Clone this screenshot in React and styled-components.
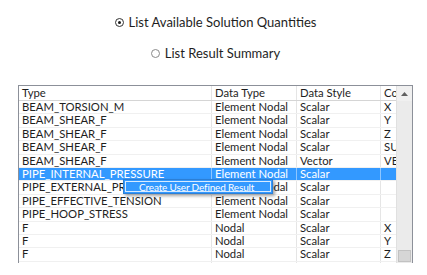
import React from "react";
import styled, { createGlobalStyle } from "styled-components";

const GlobalStyle = createGlobalStyle`
  html, body {
    margin: 0;
    padding: 0;
    background: #ffffff;
  }
  body {
    font-family: Lato, "Noto Sans", sans-serif;
    color: #1e1e1e;
  }
`;

const Page = styled.div`
  width: 427px;
  height: 275px;
  overflow: hidden;
  display: flex;
  flex-direction: column;
`;

const Options = styled.div`
  display: flex;
  flex-direction: column;
  align-items: center;
  gap: 12px;
  padding-top: 13px;
  padding-left: 4px;
  height: 73px;
  box-sizing: border-box;
`;

const RadioRow = styled.label`
  display: flex;
  align-items: center;
  gap: 5px;
  font-size: 13px;
  line-height: 19px;
  color: #1e1e1e;
`;

const RadioDot = styled.span`
  width: 7px;
  height: 7px;
  border-radius: 50%;
  border: 1px solid ${(p) => (p.checked ? "#333" : "#8a8a8a")};
  background: #fff;
  display: flex;
  align-items: center;
  justify-content: center;
  box-sizing: content-box;

  &::after {
    content: "";
    width: 3px;
    height: 3px;
    border-radius: 50%;
    background: ${(p) => (p.checked ? "#1a1a1a" : "transparent")};
  }
`;

const TableWrap = styled.div`
  margin: 12px 0 0 18px;
  width: 395px;
  height: 178px;
  border: 1px solid #8c9099;
  border-bottom: none;
  box-sizing: border-box;
  display: flex;
  position: relative;
  overflow: hidden;
`;

const Grid = styled.div`
  flex: 1;
  display: flex;
  flex-direction: column;
  overflow: hidden;
`;

const Row = styled.div`
  display: grid;
  grid-template-columns: 193px 85px 84px 1fr;
  height: ${(p) => (p.header ? "15px" : "13.4px")};
  flex: none;
  font-size: 11.3px;
  line-height: ${(p) => (p.header ? "14px" : "12px")};
  background: ${(p) => (p.selected ? "#3399ff" : "#fff")};
  color: ${(p) => (p.selected ? "#fff" : "#1e1e1e")};
  border-bottom: 1px solid ${(p) => (p.header ? "#d5d5d5" : "#f0f0f0")};
  box-sizing: border-box;
`;

const Cell = styled.div`
  padding-left: 3px;
  white-space: nowrap;
  overflow: hidden;
  border-right: 1px solid ${(p) => (p.selected ? "#8ec6ff" : "#e5e5e5")};

  &:last-child {
    border-right: none;
  }
`;

const Scrollbar = styled.div`
  width: 15px;
  flex: none;
  background: #ebebeb;
  border-left: 1px solid #e0e0e0;
  display: flex;
  flex-direction: column;
  justify-content: space-between;
`;

const ScrollArrow = styled.div`
  height: 15px;
  display: flex;
  align-items: center;
  justify-content: center;
  background: #f0f0f0;
`;

const Thumb = styled.div`
  height: 10px;
  margin: 0 1px 1px;
  background: #d6d6d6;
  border: 1px solid #c2c2c2;
`;

const ContextMenu = styled.div`
  position: absolute;
  left: 104px;
  top: 93px;
  width: 150px;
  height: 15px;
  background: #3399ff;
  border: 1px solid #2b7fd6;
  box-shadow: 2px 2px 3px rgba(0, 0, 0, 0.35);
  box-sizing: border-box;
  padding: 1px;
`;

const MenuItem = styled.div`
  height: 100%;
  border: 1px solid #d8ebff;
  box-sizing: border-box;
  color: #fff;
  font-size: 10px;
  letter-spacing: -0.15px;
  line-height: 10px;
  padding-left: 13px;
  white-space: nowrap;
  overflow: hidden;
`;

const rows = [
  ["BEAM_TORSION_M", "Element Nodal", "Scalar", "X"],
  ["BEAM_SHEAR_F", "Element Nodal", "Scalar", "Y"],
  ["BEAM_SHEAR_F", "Element Nodal", "Scalar", "Z"],
  ["BEAM_SHEAR_F", "Element Nodal", "Scalar", "SUM"],
  ["BEAM_SHEAR_F", "Element Nodal", "Vector", "VECTOR"],
  ["PIPE_INTERNAL_PRESSURE", "Element Nodal", "Scalar", ""],
  ["PIPE_EXTERNAL_PRESSURE", "Element Nodal", "Scalar", ""],
  ["PIPE_EFFECTIVE_TENSION", "Element Nodal", "Scalar", ""],
  ["PIPE_HOOP_STRESS", "Element Nodal", "Scalar", ""],
  ["F", "Nodal", "Scalar", "X"],
  ["F", "Nodal", "Scalar", "Y"],
  ["F", "Nodal", "Scalar", "Z"],
  ["F", "Nodal", "Scalar", "SUM"],
];

const App = () => {
  const selected = 5;

  return (
    <>
      <GlobalStyle />
      <Page>
        <Options>
          <RadioRow>
            <RadioDot checked />
            List Available Solution Quantities
          </RadioRow>
          <RadioRow>
            <RadioDot />
            List Result Summary
          </RadioRow>
        </Options>

        <TableWrap>
          <Grid>
            <Row header>
              <Cell>Type</Cell>
              <Cell>Data Type</Cell>
              <Cell>Data Style</Cell>
              <Cell>Component</Cell>
            </Row>
            {rows.map((r, i) => (
              <Row key={i} selected={i === selected}>
                {r.map((c, j) => (
                  <Cell key={j} selected={i === selected}>
                    {c}
                  </Cell>
                ))}
              </Row>
            ))}
          </Grid>
          <Scrollbar>
            <ScrollArrow>
              <svg width="7" height="4" viewBox="0 0 7 4">
                <path d="M0 4 L3.5 0 L7 4 Z" fill="#606060" />
              </svg>
            </ScrollArrow>
            <Thumb />
          </Scrollbar>
          <ContextMenu>
            <MenuItem>Create User Defined Result</MenuItem>
          </ContextMenu>
        </TableWrap>
      </Page>
    </>
  );
};

export default App;
